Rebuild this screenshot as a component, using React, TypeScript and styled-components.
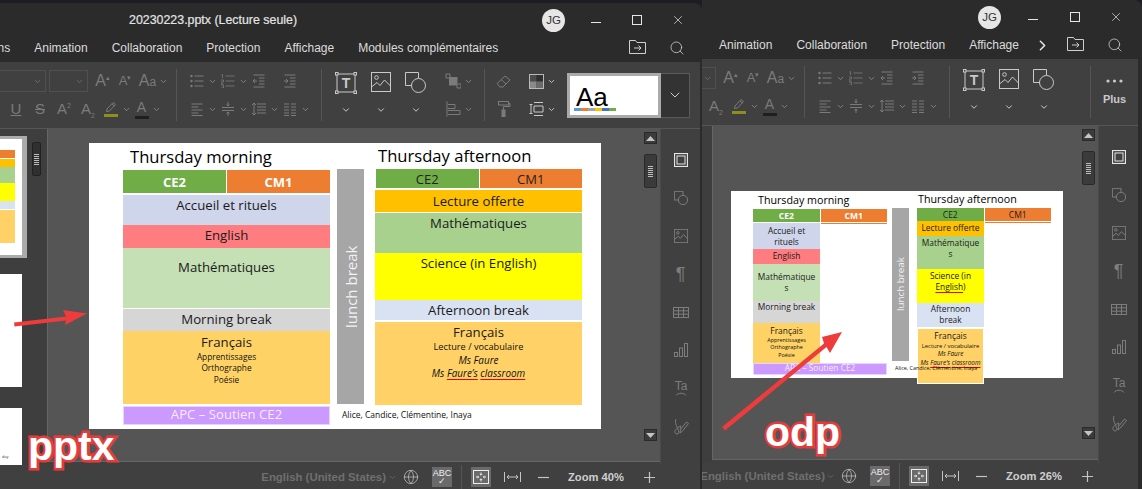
import React from "react";
import styled, { createGlobalStyle } from "styled-components";
import { ChevronDown, ChevronRight, Globe, Search, X } from "lucide-react";

const Global = createGlobalStyle`
  html, body { margin: 0; padding: 0; background: #1d1d23; overflow: hidden; }
  * { box-sizing: border-box; }
`;

const Desktop = styled.div`
  position: relative;
  width: 1142px;
  height: 489px;
  overflow: hidden;
  font-family: "Liberation Sans", Arial, sans-serif;
`;

const Win = styled.section<{ $x: number; $y: number; $w: number; $z: number; $edge: number }>`
  position: absolute;
  left: ${(p) => p.$x}px;
  top: ${(p) => p.$y}px;
  bottom: 0;
  width: ${(p) => p.$w}px;
  z-index: ${(p) => p.$z};
  display: flex;
  flex-direction: column;
  overflow: hidden;
  background: #2b2b2b;
  border-top-right-radius: 8px;
  border-right: ${(p) => p.$edge}px solid #2b2b2b;
`;

const TitleBar = styled.header<{ $right: number; $avatarGap: number }>`
  flex: none;
  height: 30px;
  padding: 4px ${(p) => p.$right}px 0 0;
  display: flex;
  align-items: center;

  & > div { margin-right: ${(p) => p.$avatarGap}px; }
`;

const DocName = styled.h1`
  margin: 0 0 0 129px;
  font-size: 12.4px;
  font-weight: 400;
  color: #e4e4e4;
  -webkit-text-stroke: 0.2px #e4e4e4;
`;

const Avatar = styled.div`
  margin-left: auto;
  width: 23px;
  height: 23px;
  border-radius: 50%;
  background: #e6e6e6;
  color: #333;
  font-size: 11.5px;
  display: flex;
  align-items: center;
  justify-content: center;
`;

const Caption = styled.button<{ $w?: number }>`
  width: ${(p) => p.$w ?? 41}px;
  height: 26px;
  padding: 0;
  border: 0;
  background: none;
  color: #e6e6e6;
  display: flex;
  align-items: center;
  justify-content: center;
`;

const MinLine = styled.span`
  width: 10px;
  height: 1px;
  margin-top: 4px;
  background: #e6e6e6;
`;

const MaxBox = styled.span`
  width: 10px;
  height: 10px;
  border: 1px solid #e6e6e6;
`;

const MenuBar = styled.nav`
  flex: none;
  height: 29px;
  padding: 1px 4px 0 0;
  display: flex;
  align-items: center;
  overflow: hidden;
`;

const MenuList = styled.div<{ $x: number }>`
  margin-left: ${(p) => p.$x}px;
  display: flex;
  align-items: center;
  gap: 24px;
`;

const MenuItem = styled.span`
  font-size: 12px;
  color: #dcdcdc;
  white-space: nowrap;
`;

const MoreMenu = styled.span`
  color: #e6e6e6;
  display: flex;
  margin-left: -9px;
`;

const MenuTools = styled.div`
  margin-left: auto;
  display: flex;
`;

const MenuTool = styled.span`
  width: 39px;
  color: #d0d0d0;
  display: flex;
  justify-content: center;
`;

const Ribbon = styled.div`
  flex: none;
  height: 67px;
  display: flex;
  align-items: center;
  background: #404040;
  border-bottom: 1px solid #565656;
  overflow: hidden;
`;

const RibbonTrack = styled.div<{ $x: number }>`
  flex: none;
  margin-left: ${(p) => p.$x}px;
  display: flex;
  align-items: center;
`;

const Group = styled.div<{ $w: number; $pad?: number; $plain?: boolean }>`
  flex: none;
  width: ${(p) => p.$w}px;
  height: 52px;
  padding-left: ${(p) => p.$pad ?? 0}px;
  display: flex;
  flex-direction: column;
  justify-content: center;
  border-right: ${(p) => (p.$plain ? "none" : "1px solid #565656")};
`;

const WideGroup = styled(Group)`
  flex-direction: row;
  align-items: center;
  justify-content: flex-start;
`;

const ToolRow = styled.div<{ $pad?: number }>`
  flex: none;
  height: 28px;
  padding-left: ${(p) => p.$pad ?? 0}px;
  display: flex;
  align-items: center;
`;

const Tool = styled.span<{ $w?: number; $bright?: boolean }>`
  flex: none;
  width: ${(p) => p.$w ?? 22}px;
  display: flex;
  flex-direction: column;
  align-items: center;
  justify-content: center;
  color: ${(p) => (p.$bright ? "#c9c9c9" : "#7b7b7b")};
`;

const Caret = styled.span<{ $bright?: boolean }>`
  flex: none;
  width: 9px;
  display: flex;
  justify-content: center;
  color: ${(p) => (p.$bright ? "#c9c9c9" : "#8a8a8a")};
`;

const Combo = styled.span<{ $w: number; $open?: boolean }>`
  flex: none;
  width: ${(p) => p.$w}px;
  height: 22px;
  margin-right: 3px;
  padding-right: 3px;
  display: flex;
  align-items: center;
  justify-content: flex-end;
  color: #777;
  border: 1px solid #505050;
  border-left: ${(p) => (p.$open ? "none" : "1px solid #505050")};
`;

const Letter = styled.span<{ $size?: number }>`
  font-size: ${(p) => p.$size ?? 15}px;
  line-height: 16px;
  color: #7b7b7b;
  white-space: nowrap;

  sup, sub { font-size: 7px; line-height: 0; }
  small { font-size: 12px; }
`;

const Under = styled(Letter)`
  text-decoration: underline;
`;

const Struck = styled(Letter)`
  text-decoration: line-through;
`;

const Swatch = styled.span<{ $c: string }>`
  width: 14px;
  height: 3px;
  margin-top: 1px;
  background: ${(p) => p.$c};
`;

const BigTool = styled.div`
  flex: none;
  width: 35px;
  height: 52px;
  display: flex;
  flex-direction: column;
  align-items: center;
  justify-content: space-between;
  padding: 3px 0 6px;
  color: #c9c9c9;
`;

const PlusTool = styled.div`
  flex: none;
  width: 47px;
  display: flex;
  flex-direction: column;
  align-items: center;
  gap: 10px;
  color: #c9c9c9;
  font-size: 11px;
  font-weight: 700;
`;

const ThemeBox = styled.div`
  flex: none;
  width: 94px;
  height: 45px;
  padding: 11px 0 0 4px;
  background: #fff;
  border: 3px solid #aaa;
`;

const ThemeAa = styled.div`
  font-size: 26px;
  line-height: 20px;
  color: #000;
  padding-left: 2px;
`;

const ThemeStrip = styled.div`
  display: flex;
  margin-top: 1px;
`;

const ThemeChip = styled.span<{ $c: string }>`
  width: 7px;
  height: 3px;
  background: ${(p) => p.$c};
`;

const ThemeMore = styled.div`
  flex: none;
  width: 29px;
  height: 45px;
  display: flex;
  align-items: center;
  justify-content: center;
  background: #333;
  border: 1px solid #5a5a5a;
  border-left: 0;
  color: #d8d8d8;
`;

const Body = styled.main`
  flex: 1;
  min-height: 0;
  display: flex;
  background: #404040;
`;

const ThumbPane = styled.aside<{ $w: number }>`
  flex: none;
  width: ${(p) => p.$w}px;
  display: flex;
  overflow: hidden;
  background: #3e3e3e;
`;

const ThumbList = styled.div`
  flex: none;
  width: 32px;
  display: flex;
  flex-direction: column;
`;

const ThumbActive = styled.div`
  flex: none;
  width: 27px;
  height: 122px;
  margin-top: 7px;
  padding-top: 11px;
  background: #fff;
  border: 3px solid #ababab;
  border-left: 0;
  border-right-width: 5px;
  display: flex;
  flex-direction: column;
`;

const ThumbBar = styled.span<{ $c: string; $h: number; $mt?: number }>`
  flex: none;
  width: 15px;
  height: ${(p) => p.$h}px;
  margin-top: ${(p) => p.$mt ?? 0}px;
  background: ${(p) => p.$c};
`;

const Thumb = styled.div<{ $h: number; $mt: number }>`
  flex: none;
  width: 22px;
  height: ${(p) => p.$h}px;
  margin-top: ${(p) => p.$mt}px;
  padding: 46px 0 0 2px;
  background: #fff;
  color: #555;
  font-size: 4px;
`;

const Splitter = styled.div`
  flex: none;
  width: 9px;
  height: 34px;
  margin-top: 13px;
  display: flex;
  align-items: center;
  justify-content: center;
  background: #303030;
  border: 1px solid #222;
  border-radius: 2px;
`;

const Grip = styled.span`
  width: 5px;
  height: 11px;
  background: repeating-linear-gradient(#bdbdbd 0 1px, transparent 1px 2px);
`;

const Stage = styled.div`
  flex: 1;
  min-width: 0;
  margin-bottom: 3px;
  display: flex;
  background: #555;
  border-left: 1px solid #666;
  border-bottom: 1px solid #666;
`;

const Canvas = styled.div<{ $x: number; $y: number }>`
  flex: 1;
  min-width: 0;
  padding: ${(p) => p.$y}px 0 0 ${(p) => p.$x}px;
`;

const ScrollCol = styled.div`
  flex: none;
  width: 17px;
  padding: 3px 3px 20px 0;
  display: flex;
  flex-direction: column;
  align-items: center;
`;

const ScrollBtn = styled.span`
  flex: none;
  width: 13px;
  height: 12px;
  display: flex;
  align-items: center;
  justify-content: center;
  background: #3b3b3b;
  border: 1px solid #2a2a2a;
  color: #c4c4c4;
`;

const ScrollThumb = styled.span`
  flex: none;
  width: 13px;
  height: 34px;
  margin-top: 10px;
  display: flex;
  align-items: center;
  justify-content: center;
  background: #3b3b3b;
  border: 1px solid #2a2a2a;
  border-radius: 2px;
`;

const ScrollRest = styled.span`
  flex: 1;
`;

const SidePanel = styled.aside`
  flex: none;
  width: 40px;
  padding-top: 12px;
  display: flex;
  flex-direction: column;
  align-items: center;
  border-left: 1px solid #4a4a4a;
`;

const SideTool = styled.span<{ $on?: boolean }>`
  flex: none;
  height: 38px;
  display: flex;
  align-items: center;
  color: ${(p) => (p.$on ? "#e6e6e6" : "#7d7d7d")};
  font-size: 18px;
`;

const StatusBar = styled.footer<{ $h: number }>`
  flex: none;
  height: ${(p) => p.$h}px;
  padding-right: 36px;
  display: flex;
  align-items: center;
  justify-content: flex-end;
  background: #404040;
  color: #d4d4d4;
`;

const Lang = styled.span`
  margin-right: 1px;
  font-size: 11.4px;
  font-weight: 700;
  color: #6f6f6f;
  white-space: nowrap;
`;

const LangCaret = styled.span`
  width: 10px;
  margin-right: 3px;
  color: #6f6f6f;
  display: flex;
  justify-content: center;
`;

const StatusIcon = styled.span<{ $w: number; $mr?: number }>`
  flex: none;
  width: ${(p) => p.$w}px;
  margin-right: ${(p) => p.$mr ?? 0}px;
  display: flex;
  justify-content: center;
  color: #c4c4c4;
`;

const StatusBox = styled.span<{ $mr: number }>`
  flex: none;
  width: 20px;
  height: 20px;
  margin-right: ${(p) => p.$mr}px;
  display: flex;
  flex-direction: column;
  align-items: center;
  justify-content: center;
  background: #6a6a6a;
  color: #eee;
  font-size: 9px;
  line-height: 8px;
`;

const StatusSep = styled.span`
  flex: none;
  align-self: stretch;
  width: 1px;
  margin-right: 9px;
  background: #555;
`;

const ZoomText = styled.span`
  flex: none;
  width: 76px;
  text-align: center;
  font-size: 11.2px;
  font-weight: 700;
  color: #cfcfcf;
`;

/* slides */

const SlideSheet = styled.article<{ $w: number; $h: number; $pad: number }>`
  position: relative;
  width: ${(p) => p.$w}px;
  height: ${(p) => p.$h}px;
  padding-left: ${(p) => p.$pad}px;
  display: flex;
  align-items: flex-start;
  background: #fff;
  color: #111;
  font-family: "Open Sans", "Noto Sans", sans-serif;
`;

const Column = styled.div<{ $w: number; $ml?: number }>`
  flex: none;
  width: ${(p) => p.$w}px;
  margin-left: ${(p) => p.$ml ?? 0}px;
`;

const SlideTitle = styled.h2<{ $h: number; $size: number; $x: number }>`
  margin: 0;
  height: ${(p) => p.$h}px;
  padding-left: ${(p) => p.$x}px;
  font-size: ${(p) => p.$size}px;
  font-weight: 400;
  line-height: ${(p) => p.$h}px;
  color: #000;
  white-space: nowrap;
`;

const HeadRow = styled.div<{ $h: number; $inset?: number }>`
  display: flex;
  gap: 1px;
  height: ${(p) => p.$h}px;
  margin-left: ${(p) => p.$inset ?? 0}px;
`;

const HeadCell = styled.div<{ $bg: string; $light?: boolean; $size: number; $rule?: boolean }>`
  flex: 1;
  display: flex;
  align-items: center;
  justify-content: center;
  background: ${(p) => p.$bg};
  color: ${(p) => (p.$light ? "#fff" : "#222")};
  font-size: ${(p) => p.$size}px;
  font-weight: ${(p) => (p.$light ? 700 : 400)};
  box-shadow: ${(p) => (p.$rule ? `0 1px 0 #fff, 0 2px 0 ${p.$bg}` : "none")};
`;

const Block = styled.div<{
  $bg: string;
  $h: number;
  $mt?: number;
  $pt?: number;
  $size: number;
  $w?: number;
  $light?: boolean;
  $edge?: string;
}>`
  width: ${(p) => (p.$w ? `${p.$w}px` : "100%")};
  height: ${(p) => p.$h}px;
  margin-top: ${(p) => p.$mt ?? 0}px;
  padding-top: ${(p) => p.$pt ?? 0}px;
  background: ${(p) => p.$bg};
  color: ${(p) => (p.$light ? "#f4ecff" : "#1a1a1a")};
  font-size: ${(p) => p.$size}px;
  line-height: 1.3;
  text-align: center;
  white-space: nowrap;
  outline: ${(p) => (p.$edge ? `1px solid ${p.$edge}` : "none")};
  outline-offset: -1px;
`;

const SubLine = styled.div<{ $size: number }>`
  font-size: ${(p) => p.$size}px;
  line-height: 1.36;
  color: #111;
`;

const Slanted = styled.i`
  font-size: 1.08em;
`;

const Misspelled = styled.span`
  text-decoration: underline;
  text-decoration-color: #f00000;
  text-decoration-thickness: 1px;
  text-underline-offset: 2px;
`;

const Lunch = styled.div<{ $w: number; $h: number; $ml: number; $mt: number; $size: number }>`
  flex: none;
  width: ${(p) => p.$w}px;
  height: ${(p) => p.$h}px;
  margin: ${(p) => p.$mt}px 0 0 ${(p) => p.$ml}px;
  display: flex;
  align-items: center;
  justify-content: center;
  background: #a6a6a6;
  color: #f2f2f2;
  font-size: ${(p) => p.$size}px;
  writing-mode: vertical-rl;
  transform: rotate(180deg);
`;

const Pupils = styled.div<{ $x: number; $y: number; $size: number }>`
  position: absolute;
  left: ${(p) => p.$x}px;
  top: ${(p) => p.$y}px;
  font-size: ${(p) => p.$size}px;
  line-height: 1;
  color: #111;
  white-space: nowrap;
`;

/* annotations */

const Overlay = styled.svg`
  position: absolute;
  left: 0;
  top: 0;
  z-index: 5;
`;

const Tag = styled.div<{ $x: number; $y: number }>`
  position: absolute;
  left: ${(p) => p.$x}px;
  top: ${(p) => p.$y}px;
  z-index: 6;
  font-size: 41px;
  font-weight: 700;
  line-height: 42px;
  color: #fff;
  -webkit-text-stroke: 5px #e63b3b;
  paint-order: stroke fill;
`;

/* icons */

const Ico = ({ w = 16, h = 16, children }: { w?: number; h?: number; children: React.ReactNode }) => (
  <svg width={w} height={h} viewBox={`0 0 ${w} ${h}`} fill="none" stroke="currentColor" strokeWidth="1">
    {children}
  </svg>
);

const Chev = ({ bright, size = 9 }: { bright?: boolean; size?: number }) => (
  <Caret $bright={bright}>
    <ChevronDown size={size} strokeWidth={2.4} />
  </Caret>
);

const Bullets = () => (
  <Ico w={14} h={14}>
    <path d="M4.5 2h9M4.5 7h9M4.5 12h9" />
    <circle cx="1.5" cy="2" r="1.2" fill="currentColor" stroke="none" />
    <circle cx="1.5" cy="7" r="1.2" fill="currentColor" stroke="none" />
    <circle cx="1.5" cy="12" r="1.2" fill="currentColor" stroke="none" />
  </Ico>
);
const Numbers = () => (
  <Ico w={14} h={14}>
    <path d="M4.5 2h9M4.5 7h9M4.5 12h9M.5 1l1-.5V4M0 6h2.5V8H0v2h2.5M0 11h2.5v3H0" strokeWidth=".8" />
  </Ico>
);
const Outdent = () => (
  <Ico w={14} h={14}>
    <path d="M1.5 1h11M7 4h5.5M7 7h5.5M7 10h5.5M1.5 13h11M5 7H1M3 5 1 7l2 2" />
  </Ico>
);
const Indent = () => (
  <Ico w={14} h={14}>
    <path d="M1.5 1h11M7 4h5.5M7 7h5.5M7 10h5.5M1.5 13h11M1 7h4M3 5l2 2-2 2" />
  </Ico>
);
const AlignLeft = () => (
  <Ico w={14} h={14}>
    <path d="M1.5 2h11M1.5 5h7M1.5 8h11M1.5 11h7M1.5 13.5h11" />
  </Ico>
);
const VAlign = () => (
  <Ico w={14} h={16}>
    <path d="M1 6.500h12M1 9.500h12M7 1v4M5.500 3.500 7 5l1.500-1.500M7 15v-4M5.500 12.500 7 11l1.500 1.500" />
  </Ico>
);
const LineGap = () => (
  <Ico w={16} h={14}>
    <path d="M6 2h9M6 5h9M6 8h9M6 11h9M3 1v12M1 3l2-2 2 2M1 11l2 2 2-2" />
  </Ico>
);
const Cols = () => (
  <Ico w={14} h={14}>
    <path d="M1 2h5M8 2h5M1 5h5M8 5h5M1 8h5M8 8h5M1 11h5M8 11h5M1 13.500h5M8 13.500h5" />
  </Ico>
);
const Pen = () => (
  <Ico w={15} h={12}>
    <path d="M3 8 9 1.500l2.500 2-6 6.500-3 .5zM8 3l2.500 2" />
  </Ico>
);
const TextBox = () => (
  <Ico w={22} h={22}>
    <rect x="2" y="2" width="18" height="18" />
    <rect x=".5" y=".5" width="2.500" height="2.500" fill="#404040" />
    <rect x="19" y=".5" width="2.500" height="2.500" fill="#404040" />
    <rect x=".5" y="19" width="2.500" height="2.500" fill="#404040" />
    <rect x="19" y="19" width="2.500" height="2.500" fill="#404040" />
    <text x="11" y="16" textAnchor="middle" fontSize="14" fontWeight="700" fill="currentColor" stroke="none" fontFamily="Liberation Sans">T</text>
  </Ico>
);
const Picture = ({ s = 20 }: { s?: number }) => (
  <svg width={s} height={s} viewBox="0 0 20 20" fill="none" stroke="currentColor" strokeWidth={20 / s}>
    <rect x=".5" y=".5" width="19" height="19" />
    <circle cx="5.500" cy="5.500" r="1.800" />
    <path d="M.5 15 6 10.500 9 13.500 13.500 8 19.500 14" />
  </svg>
);
const Shapes = ({ s = 21 }: { s?: number }) => (
  <svg width={s} height={s} viewBox="0 0 21 21" fill="none" stroke="currentColor" strokeWidth={21 / s}>
    <path d="M7 13.500H.5V.5h13V6" />
    <circle cx="13.500" cy="13.500" r="7" />
  </svg>
);
const Arrange = () => (
  <Ico>
    <path d="M5 4V1H1v4h3M12 12v3h4v-4h-3" />
    <rect x="4.500" y="4.500" width="7.500" height="7.500" fill="currentColor" />
  </Ico>
);
const AlignShapes = () => (
  <Ico w={15} h={16}>
    <path d="M1 .5v15M2 3.500h7v4H2M2 9.500h12v4H2" />
  </Ico>
);
const Eraser = () => (
  <Ico>
    <path d="M1 10.500 9 3l5 4-7 7H4zM5 6.500l5 4.500" />
  </Ico>
);
const FillGrid = () => (
  <Ico w={15} h={15}>
    <rect x=".5" y=".5" width="14" height="14" stroke="#b9b9b9" />
    <rect x="1" y="1" width="6.500" height="6.500" fill="#4c4c4c" stroke="none" />
    <rect x="7.500" y="1" width="6.500" height="6.500" fill="#2f2f2f" stroke="none" />
    <rect x="1" y="7.500" width="6.500" height="6.500" fill="#8a8a8a" stroke="none" />
    <rect x="7.500" y="7.500" width="6.500" height="6.500" fill="#6a6a6a" stroke="none" />
  </Ico>
);
const Roller = () => (
  <Ico w={14} h={16}>
    <rect x="1.500" y=".5" width="10" height="3.500" />
    <path d="M11.500 2.500h1.500v3H6.500V9" />
    <rect x="5" y="9" width="3" height="6.500" fill="currentColor" />
  </Ico>
);
const Layout = () => (
  <Ico w={15} h={14}>
    <path d="M5 .5h9M5 13.500h9M5 4h9v6H5zM.5 2.500h3M2 2.500v9M.5 11.500h3" />
  </Ico>
);
const FolderMove = () => (
  <Ico w={17} h={14}>
    <path d="M.5 13.500V.5h6l1.500 2h8.500v11zM5 8h7M9.500 5.500 12 8l-2.500 2.500" />
  </Ico>
);
const Frame = () => (
  <Ico w={14} h={14}>
    <rect x=".5" y=".5" width="13" height="13" strokeWidth="1.200" />
    <rect x="3" y="3" width="8" height="8" />
  </Ico>
);
const Table = () => (
  <Ico w={16} h={11}>
    <rect x=".5" y=".5" width="15" height="10" />
    <path d="M.5 3.800h15M.5 7.200h15M5.500 .5v10M10.500 .5v10" />
  </Ico>
);
const Bars = () => (
  <Ico w={14} h={14}>
    <rect x=".5" y="9.500" width="3" height="4" />
    <rect x="5.500" y="5" width="3" height="8.500" />
    <rect x="10.500" y=".5" width="3" height="13" />
  </Ico>
);
const TextShape = () => (
  <Ico w={14} h={17}>
    <text x="7" y="10" textAnchor="middle" fontSize="12" fill="currentColor" stroke="none" fontFamily="Liberation Sans">Ta</text>
    <path d="M2 15.500c2-3 8-3 10 0" />
  </Ico>
);
const Sign = () => (
  <Ico w={17} h={17}>
    <path d="M4 1c-2 4 2 9 3 13 .4 2-3 3-4 .5S6 9 9 8c-1 2-1 3 0 3" />
    <path d="M8 15l.5-3.500 6-7.500 2 1.500-6 7.500z" />
  </Ico>
);
const FitSlide = () => (
  <Ico w={16} h={16}>
    <rect x=".5" y="1.500" width="15" height="13" />
    <path d="M8 3.500v2.500M6.800 5 8 6.200 9.200 5M8 12.500V10M6.800 11 8 9.800 9.200 11M3 8h2.500M4.500 6.800 5.700 8 4.500 9.200M13 8h-2.500M11.500 6.800 10.300 8l1.200 1.200" />
  </Ico>
);
const FitWidth = () => (
  <Ico w={17} h={12}>
    <path d="M.5 1v10M16.500 1v10M3 6h11M5 4 3 6l2 2M12 4l2 2-2 2" />
  </Ico>
);
const MinusMark = () => (
  <Ico w={11} h={3}>
    <path d="M0 1.500h11" strokeWidth="1.200" />
  </Ico>
);
const PlusMark = () => (
  <Ico w={11} h={11}>
    <path d="M0 5.500h11M5.500 0v11" strokeWidth="1.200" />
  </Ico>
);
const Dots = () => (
  <Ico w={17} h={4}>
    <circle cx="2" cy="2" r="1.600" fill="currentColor" stroke="none" />
    <circle cx="8.500" cy="2" r="1.600" fill="currentColor" stroke="none" />
    <circle cx="15" cy="2" r="1.600" fill="currentColor" stroke="none" />
  </Ico>
);
const Wedge = ({ down }: { down?: boolean }) => (
  <svg width="9" height="5" viewBox="0 0 9 5" fill="currentColor">
    <path d={down ? "M0 0h9L4.500 5z" : "M0 5h9L4.500 0z"} />
  </svg>
);

/* ribbon parts */

const FontTools = ({ trimmed }: { trimmed?: boolean }) => (
  <Group $w={177}>
    <ToolRow>
      <Combo $w={46} $open><ChevronDown size={9} strokeWidth={2} /></Combo>
      <Combo $w={39}><ChevronDown size={9} strokeWidth={2} /></Combo>
      <Tool $w={23}><Letter $size={16}>A<sup>▴</sup></Letter></Tool>
      <Tool $w={22}><Letter $size={13}>A<sup>▾</sup></Letter></Tool>
      <Tool $w={23}><Letter $size={16}>A<small>a</small></Letter></Tool>
      <Chev />
    </ToolRow>
    <ToolRow $pad={trimmed ? 76 : 4}>
      {!trimmed && (
        <>
          <Tool $w={24}><Under>U</Under></Tool>
          <Tool $w={24}><Struck>S</Struck></Tool>
          <Tool $w={24}><Letter>A<sup>2</sup></Letter></Tool>
        </>
      )}
      <Tool $w={24}><Letter>A<sub>2</sub></Letter></Tool>
      <Tool $w={22}><Pen /><Swatch $c="#8f8d1d" /></Tool>
      <Chev />
      <Tool $w={21}><Letter $size={14}>A</Letter><Swatch $c="#1f1f1f" /></Tool>
      <Chev />
    </ToolRow>
  </Group>
);

const ParagraphTools = () => (
  <Group $w={145} $pad={9}>
    <ToolRow>
      <Tool><Bullets /></Tool><Chev />
      <Tool><Numbers /></Tool><Chev />
      <Tool><Outdent /></Tool>
      <Tool $w={9} />
      <Tool><Indent /></Tool>
    </ToolRow>
    <ToolRow>
      <Tool><AlignLeft /></Tool><Chev />
      <Tool><VAlign /></Tool><Chev />
      <Tool><LineGap /></Tool><Chev />
      <Tool><Cols /></Tool><Chev />
    </ToolRow>
  </Group>
);

const InsertTrio = () => (
  <>
    <BigTool><TextBox /><ChevronDown size={10} strokeWidth={2.4} /></BigTool>
    <BigTool><Picture /><ChevronDown size={10} strokeWidth={2.4} /></BigTool>
    <BigTool><Shapes /><ChevronDown size={10} strokeWidth={2.4} /></BigTool>
  </>
);

const themeChips = ["#5b9bd5", "#ed7d31", "#a5a5a5", "#ffc000", "#4472c4", "#70ad47"];

const FrontRibbon = () => (
  <Ribbon>
    <RibbonTrack $x={0}>
      <FontTools />
      <ParagraphTools />
      <WideGroup $w={163} $pad={6}>
        <InsertTrio />
        <Group $w={44} $pad={9} $plain>
          <ToolRow><Tool><Arrange /></Tool><Chev /></ToolRow>
          <ToolRow><Tool><AlignShapes /></Tool><Chev /></ToolRow>
        </Group>
      </WideGroup>
      <Group $w={82} $pad={8} $plain>
        <ToolRow><Tool><Eraser /></Tool><Tool $w={10} /><Tool $bright><FillGrid /></Tool><Chev bright /></ToolRow>
        <ToolRow><Tool><Roller /></Tool><Tool $w={10} /><Tool $bright><Layout /></Tool><Chev bright /></ToolRow>
      </Group>
      <ThemeBox>
        <ThemeAa>Aa</ThemeAa>
        <ThemeStrip>{themeChips.map((c) => <ThemeChip key={c} $c={c} />)}</ThemeStrip>
      </ThemeBox>
      <ThemeMore><ChevronDown size={16} strokeWidth={1.4} /></ThemeMore>
    </RibbonTrack>
  </Ribbon>
);

const BackRibbon = () => (
  <Ribbon>
    <RibbonTrack $x={-74}>
      <FontTools trimmed />
      <ParagraphTools />
      <WideGroup $w={141} $pad={6}>
        <InsertTrio />
      </WideGroup>
      <PlusTool><Dots /><span>Plus</span></PlusTool>
    </RibbonTrack>
  </Ribbon>
);

const Scroller = () => (
  <ScrollCol>
    <ScrollBtn><Wedge /></ScrollBtn>
    <ScrollThumb><Grip /></ScrollThumb>
    <ScrollRest />
    <ScrollBtn><Wedge down /></ScrollBtn>
  </ScrollCol>
);

const SideTools = () => (
  <SidePanel>
    <SideTool $on><Frame /></SideTool>
    <SideTool><Shapes s={14} /></SideTool>
    <SideTool><Picture s={14} /></SideTool>
    <SideTool>¶</SideTool>
    <SideTool><Table /></SideTool>
    <SideTool><Bars /></SideTool>
    <SideTool><TextShape /></SideTool>
    <SideTool><Sign /></SideTool>
  </SidePanel>
);

const Status = ({ zoom, h }: { zoom: string; h: number }) => (
  <StatusBar $h={h}>
    <Lang>English (United States)</Lang>
    <LangCaret><ChevronDown size={9} strokeWidth={2} /></LangCaret>
    <StatusIcon $w={22} $mr={10}><Globe size={16} strokeWidth={1.1} /></StatusIcon>
    <StatusBox $mr={9}>ABC<span>✓</span></StatusBox>
    <StatusSep />
    <StatusBox $mr={6}><FitSlide /></StatusBox>
    <StatusIcon $w={31}><FitWidth /></StatusIcon>
    <StatusIcon $w={30}><MinusMark /></StatusIcon>
    <ZoomText>{zoom}</ZoomText>
    <StatusIcon $w={30}><PlusMark /></StatusIcon>
  </StatusBar>
);

/* slide contents */

type Row = {
  lines: React.ReactNode[];
  bg: string;
  h: number;
  mt?: number;
  pt?: number;
  w?: number;
  light?: boolean;
  edge?: string;
  subs?: React.ReactNode[];
};

type Side = {
  title: string;
  titleX: number;
  titleH: number;
  headH: number;
  headInset?: number;
  lightHead: boolean;
  subSize: number;
  rows: Row[];
  ml?: number;
};

type Plan = {
  w: number;
  h: number;
  pad: number;
  col: number;
  titleSize: number;
  size: number;
  rule: boolean;
  left: Side;
  right: Side;
  lunch: { w: number; h: number; ml: number; mt: number; size: number };
  note: { x: number; y: number; size: number };
};

const subsLeft: React.ReactNode[] = ["Apprentissages", "Orthographe", "Poésie"];
const subsRight: React.ReactNode[] = [
  "Lecture / vocabulaire",
  <Slanted key="a">Ms Faure</Slanted>,
  <Slanted key="b">Ms <Misspelled>Faure’s</Misspelled> <Misspelled>classroom</Misspelled></Slanted>,
];

const bigSlide: Plan = {
  w: 512, h: 286, pad: 34, col: 207,
  titleSize: 16.6, size: 13.2, rule: false,
  left: {
    title: "Thursday morning", titleX: 7, titleH: 27, headH: 23, lightHead: true, subSize: 8.3,
    rows: [
      { lines: ["Accueil et rituels"], bg: "#cfd5ea", h: 30, mt: 2, pt: 2 },
      { lines: ["English"], bg: "#ff7c80", h: 23, pt: 2 },
      { lines: ["Mathématiques"], bg: "#c5e0b4", h: 60, pt: 11 },
      { lines: ["Morning break"], bg: "#d6d6d6", h: 22, mt: 1, pt: 2 },
      { lines: ["Français"], bg: "#ffd265", h: 73, pt: 3, subs: subsLeft },
      { lines: ["APC – Soutien CE2"], bg: "#cc99ff", h: 19, mt: 2, light: true, edge: "#e6d5ff" },
    ],
  },
  right: {
    title: "Thursday afternoon", titleX: 3, titleH: 26, headH: 19, headInset: 1, lightHead: false, ml: 11, subSize: 9.2,
    rows: [
      { lines: ["Lecture offerte"], bg: "#ffc000", h: 22, mt: 2, pt: 3 },
      { lines: ["Mathématiques"], bg: "#a9d18e", h: 40, mt: 1, pt: 2 },
      { lines: ["Science (in English)"], bg: "#ffff00", h: 47, pt: 2 },
      { lines: ["Afternoon break"], bg: "#d9e2f3", h: 20, pt: 2 },
      { lines: ["Français"], bg: "#ffd166", h: 83, mt: 2, pt: 2, subs: subsRight },
    ],
  },
  lunch: { w: 27, h: 235, ml: 7, mt: 26, size: 15 },
  note: { x: 253, y: 268, size: 8.5 },
};

const smallSlide: Plan = {
  w: 332, h: 187, pad: 22, col: 134,
  titleSize: 10.7, size: 8.4, rule: true,
  left: {
    title: "Thursday morning", titleX: 5, titleH: 18, headH: 13, lightHead: true, subSize: 5.4,
    rows: [
      { lines: ["Accueil et", "rituels"], bg: "#cfd5ea", h: 26, mt: 1, pt: 3, w: 67 },
      { lines: ["English"], bg: "#ff7c80", h: 15, pt: 2, w: 67 },
      { lines: ["Mathématique", "s"], bg: "#c5e0b4", h: 37, pt: 8, w: 67 },
      { lines: ["Morning break"], bg: "#d6d6d6", h: 22, pt: 1, w: 67 },
      { lines: ["Français"], bg: "#ffd265", h: 40, pt: 3, w: 67, subs: subsLeft },
      { lines: ["APC – Soutien CE2"], bg: "#cc99ff", h: 12, light: true, edge: "#e6d5ff" },
    ],
  },
  right: {
    title: "Thursday afternoon", titleX: 1, titleH: 17, headH: 13, lightHead: false, ml: 8, subSize: 5.9,
    rows: [
      { lines: ["Lecture offerte"], bg: "#ffc000", h: 15, pt: 2, w: 67 },
      { lines: ["Mathématique", "s"], bg: "#a9d18e", h: 33, pt: 2, w: 67 },
      { lines: ["Science (in", <><Misspelled>English</Misspelled>)</>], bg: "#ffff00", h: 34, pt: 2, w: 67 },
      { lines: ["Afternoon", "break"], bg: "#d9e2f3", h: 24, pt: 1, w: 67 },
      { lines: ["Français"], bg: "#ffd166", h: 56, mt: 1, pt: 3, w: 67, edge: "#fff", subs: subsRight },
    ],
  },
  lunch: { w: 17, h: 153, ml: 5, mt: 17, size: 9.8 },
  note: { x: 164, y: 175, size: 5.4 },
};

const Half = ({ side, plan, headSize }: { side: Side; plan: Plan; headSize: number }) => (
  <Column $w={plan.col} $ml={side.ml}>
    <SlideTitle $h={side.titleH} $size={plan.titleSize} $x={side.titleX}>{side.title}</SlideTitle>
    <HeadRow $h={side.headH} $inset={side.headInset}>
      <HeadCell $bg="#70ad47" $light={side.lightHead} $size={headSize}>CE2</HeadCell>
      <HeadCell $bg="#ed7d31" $light={side.lightHead} $size={headSize} $rule={plan.rule}>CM1</HeadCell>
    </HeadRow>
    {side.rows.map((r, i) => (
      <Block key={i} $bg={r.bg} $h={r.h} $mt={r.mt} $pt={r.pt} $w={r.w} $size={plan.size} $light={r.light} $edge={r.edge}>
        {r.lines.map((l, j) => <div key={j}>{l}</div>)}
        {r.subs?.map((s, j) => <SubLine key={j} $size={side.subSize}>{s}</SubLine>)}
      </Block>
    ))}
  </Column>
);

const Slide = ({ plan, headSize }: { plan: Plan; headSize: number }) => (
  <SlideSheet $w={plan.w} $h={plan.h} $pad={plan.pad}>
    <Half side={plan.left} plan={plan} headSize={headSize} />
    <Lunch $w={plan.lunch.w} $h={plan.lunch.h} $ml={plan.lunch.ml} $mt={plan.lunch.mt} $size={plan.lunch.size}>lunch break</Lunch>
    <Half side={plan.right} plan={plan} headSize={headSize} />
    <Pupils $x={plan.note.x} $y={plan.note.y} $size={plan.note.size}>Alice, Candice, Clémentine, Inaya</Pupils>
  </SlideSheet>
);

const activeBars = [
  { c: "#ed7d31", h: 8 },
  { c: "#ffc000", h: 8, mt: 1 },
  { c: "#a9d18e", h: 16 },
  { c: "#ffff00", h: 18 },
  { c: "#d9e2f3", h: 8 },
  { c: "#ffd166", h: 33, mt: 1 },
];

const Thumbs = () => (
  <ThumbPane $w={47}>
    <ThumbList>
      <ThumbActive>
        {activeBars.map((b) => <ThumbBar key={b.c} $c={b.c} $h={b.h} $mt={b.mt} />)}
      </ThumbActive>
      <Thumb $h={113} $mt={16} />
      <Thumb $h={57} $mt={21}>day</Thumb>
    </ThumbList>
    <Splitter><Grip /></Splitter>
  </ThumbPane>
);

export default function App() {
  return (
    <Desktop>
      <Global />
      <Win $x={702} $y={0} $w={440} $z={1} $edge={4}>
        <TitleBar $right={2} $avatarGap={10}>
          <Avatar>JG</Avatar>
          <Caption $w={43}><MinLine /></Caption>
          <Caption><MaxBox /></Caption>
          <Caption><X size={14} strokeWidth={1.2} /></Caption>
        </TitleBar>
        <MenuBar>
          <MenuList $x={17}>
            <MenuItem>Animation</MenuItem>
            <MenuItem>Collaboration</MenuItem>
            <MenuItem>Protection</MenuItem>
            <MenuItem>Affichage</MenuItem>
            <MoreMenu><ChevronRight size={17} strokeWidth={2.2} /></MoreMenu>
          </MenuList>
          <MenuTools>
            <MenuTool><FolderMove /></MenuTool>
            <MenuTool><Search size={16} strokeWidth={1.2} /></MenuTool>
          </MenuTools>
        </MenuBar>
        <BackRibbon />
        <Body>
          <ThumbPane $w={10} />
          <Stage>
            <Canvas $x={18} $y={65}><Slide plan={smallSlide} headSize={8.5} /></Canvas>
            <Scroller />
          </Stage>
          <SideTools />
        </Body>
        <Status zoom="Zoom 26%" h={26} />
      </Win>

      <Win $x={0} $y={3} $w={702} $z={2} $edge={2}>
        <TitleBar $right={2} $avatarGap={10}>
          <DocName>20230223.pptx (Lecture seule)</DocName>
          <Avatar>JG</Avatar>
          <Caption><MinLine /></Caption>
          <Caption><MaxBox /></Caption>
          <Caption><X size={14} strokeWidth={1.2} /></Caption>
        </TitleBar>
        <MenuBar>
          <MenuList $x={-48}>
            <MenuItem>Transitions</MenuItem>
            <MenuItem>Animation</MenuItem>
            <MenuItem>Collaboration</MenuItem>
            <MenuItem>Protection</MenuItem>
            <MenuItem>Affichage</MenuItem>
            <MenuItem>Modules complémentaires</MenuItem>
          </MenuList>
          <MenuTools>
            <MenuTool><FolderMove /></MenuTool>
            <MenuTool><Search size={16} strokeWidth={1.2} /></MenuTool>
          </MenuTools>
        </MenuBar>
        <FrontRibbon />
        <Body>
          <Thumbs />
          <Stage>
            <Canvas $x={41} $y={14}><Slide plan={bigSlide} headSize={13} /></Canvas>
            <Scroller />
          </Stage>
          <SideTools />
        </Body>
        <Status zoom="Zoom 40%" h={24} />
      </Win>

      <Overlay width="1142" height="489" viewBox="0 0 1142 489">
        <path d="M14 322.500 66 316.500 63 310 87 313.500 65 325 66 320.500 14.500 326.500z" fill="#ee3b3b" />
        <path d="M722 427 824 343.500 822 337 842 332 830 353 826.500 347 725 430.500z" fill="#ee3b3b" />
      </Overlay>
      <Tag $x={28} $y={425}>pptx</Tag>
      <Tag $x={765} $y={411}>odp</Tag>
    </Desktop>
  );
}
